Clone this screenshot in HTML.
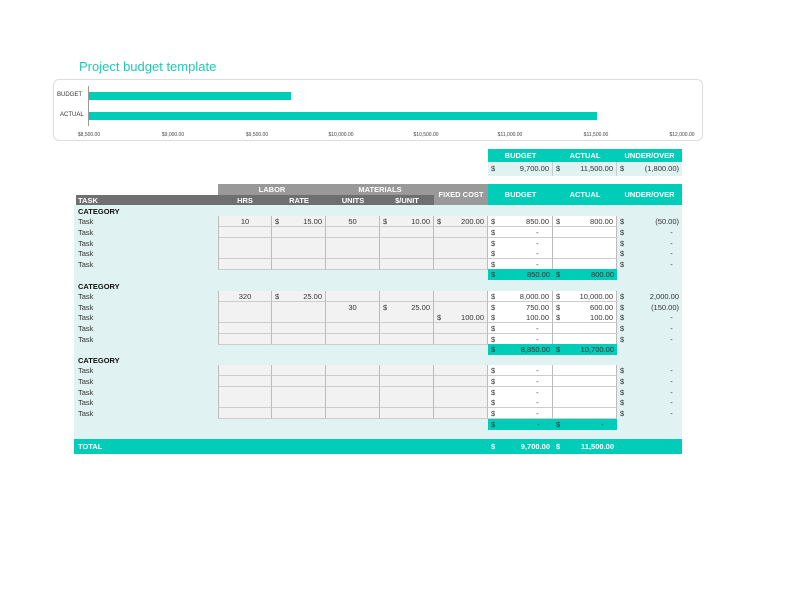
<!DOCTYPE html>
<html><head><style>
*{margin:0;padding:0;box-sizing:border-box}
body{width:790px;height:610px;background:#fff;font-family:"Liberation Sans",sans-serif;position:relative;overflow:hidden;color:#333}
.a{position:absolute}
.title{left:79px;top:59px;font-size:13px;color:#1ccbb5}
.chart{left:53px;top:79px;width:650px;height:62px;border:1px solid #ddd;border-radius:6px}
.lbl{font-size:6px;color:#333}
.bar{background:#00cdb8;height:8px}
.ax{font-size:5px;color:#444;transform:translateX(-50%)}
.row{position:absolute;left:76px;width:606px;height:11px;display:flex;font-size:7.5px;line-height:11px}
.row>div{height:11px}
.t{width:142px;padding-left:2px}
.g{width:54px;background:#f2f2f2;border-right:1px solid #bbb;border-bottom:1px solid #ccc;display:flex;justify-content:space-between;padding:0 3px}
.g.c{justify-content:center}
.g.f{border-left:1px solid #bbb}
.w{background:#fff;border-bottom:1px solid #ccc;border-right:1px solid #bbb;display:flex;justify-content:space-between;padding:0 3px}
.b{width:65px}.ac{width:64px}.u{width:65px;display:flex;justify-content:space-between;padding:0 3px}
.cat{position:absolute;left:78px;font-size:7.5px;font-weight:bold;color:#111}
.sub{position:absolute;left:488px;width:129px;height:11px;background:#00cdb8;display:flex;font-size:7.5px;line-height:11px;color:#333}
.sub div{display:flex;justify-content:space-between;padding:0 3px}
.hd{color:#fff;font-size:7.5px;font-weight:bold;display:flex;align-items:center;justify-content:center}
</style></head><body>
<div class="a title">Project budget template</div>
<div class="a chart"></div>
<div class="a lbl" style="left:57px;top:92px">BUDGET</div>
<div class="a lbl" style="left:60px;top:112px">ACTUAL</div>
<div class="a" style="left:88px;top:86px;width:1px;height:40px;background:#999"></div>
<div class="a bar" style="left:89px;top:92px;width:202px"></div>
<div class="a bar" style="left:89px;top:112px;width:508px"></div>
<div class="a ax" style="left:89px;top:132px">$8,500.00</div>
<div class="a ax" style="left:173px;top:132px">$9,000.00</div>
<div class="a ax" style="left:257px;top:132px">$9,500.00</div>
<div class="a ax" style="left:341px;top:132px">$10,000.00</div>
<div class="a ax" style="left:426px;top:132px">$10,500.00</div>
<div class="a ax" style="left:510px;top:132px">$11,000.00</div>
<div class="a ax" style="left:596px;top:132px">$11,500.00</div>
<div class="a ax" style="left:682px;top:132px">$12,000.00</div>

<div class="a" style="left:488px;top:149px;width:194px;height:13px;background:#00cdb8;display:flex">
<div class="hd" style="width:65px">BUDGET</div><div class="hd" style="width:64px">ACTUAL</div><div class="hd" style="width:65px">UNDER/OVER</div></div>
<div class="a" style="left:488px;top:162px;width:194px;height:14px;background:#e0f2f1;display:flex;font-size:7.5px;line-height:14px">
<div style="width:65px;display:flex;justify-content:space-between;padding:0 3px;border-right:1px solid #ccc"><span>$</span><span>9,700.00</span></div>
<div style="width:64px;display:flex;justify-content:space-between;padding:0 3px;border-right:1px solid #ccc"><span>$</span><span>11,500.00</span></div>
<div style="width:65px;display:flex;justify-content:space-between;padding:0 3px"><span>$</span><span>(1,800.00)</span></div></div>

<div class="a" style="left:74px;top:205px;width:608px;height:234px;background:#e0f2f1"></div>
<div class="a" style="left:218px;top:184px;width:216px;height:11px;background:#999;display:flex"><div class="hd" style="width:108px">LABOR</div><div class="hd" style="width:108px">MATERIALS</div></div>
<div class="a" style="left:76px;top:195px;width:358px;height:10px;background:#6f6f6f;display:flex">
<div class="hd" style="width:142px;justify-content:flex-start;padding-left:2px">TASK</div><div class="hd" style="width:54px">HRS</div><div class="hd" style="width:54px">RATE</div><div class="hd" style="width:54px">UNITS</div><div class="hd" style="width:54px">$/UNIT</div></div>
<div class="a hd" style="left:434px;top:184px;width:54px;height:21px;background:#999">FIXED COST</div>
<div class="a" style="left:488px;top:184px;width:194px;height:21px;background:#00cdb8;display:flex"><div class="hd" style="width:65px">BUDGET</div><div class="hd" style="width:64px">ACTUAL</div><div class="hd" style="width:65px">UNDER/OVER</div></div>

<div class="cat" style="top:207px">CATEGORY</div>
<div class="row" style="top:216px"><div class="t">Task</div><div class="g c f">10</div><div class="g"><span>$</span><span>15.00</span></div><div class="g c">50</div><div class="g"><span>$</span><span>10.00</span></div><div class="g"><span>$</span><span>200.00</span></div><div class="w b"><span>$</span><span>850.00</span></div><div class="w ac"><span>$</span><span>800.00</span></div><div class="u"><span>$</span><span>(50.00)</span></div></div>
<div class="row" style="top:227px"><div class="t">Task</div><div class="g f"></div><div class="g"></div><div class="g"></div><div class="g"></div><div class="g"></div><div class="w b"><span>$</span><span>-&nbsp;&nbsp;&nbsp;&nbsp;&nbsp;</span></div><div class="w ac"></div><div class="u"><span>$</span><span>-&nbsp;&nbsp;&nbsp;</span></div></div>
<div class="row" style="top:238px"><div class="t">Task</div><div class="g f"></div><div class="g"></div><div class="g"></div><div class="g"></div><div class="g"></div><div class="w b"><span>$</span><span>-&nbsp;&nbsp;&nbsp;&nbsp;&nbsp;</span></div><div class="w ac"></div><div class="u"><span>$</span><span>-&nbsp;&nbsp;&nbsp;</span></div></div>
<div class="row" style="top:248px"><div class="t">Task</div><div class="g f"></div><div class="g"></div><div class="g"></div><div class="g"></div><div class="g"></div><div class="w b"><span>$</span><span>-&nbsp;&nbsp;&nbsp;&nbsp;&nbsp;</span></div><div class="w ac"></div><div class="u"><span>$</span><span>-&nbsp;&nbsp;&nbsp;</span></div></div>
<div class="row" style="top:259px"><div class="t">Task</div><div class="g f"></div><div class="g"></div><div class="g"></div><div class="g"></div><div class="g"></div><div class="w b"><span>$</span><span>-&nbsp;&nbsp;&nbsp;&nbsp;&nbsp;</span></div><div class="w ac"></div><div class="u"><span>$</span><span>-&nbsp;&nbsp;&nbsp;</span></div></div>
<div class="sub" style="top:269px"><div style="width:65px"><span>$</span><span>850.00</span></div><div style="width:64px"><span>$</span><span>800.00</span></div></div>

<div class="cat" style="top:282px">CATEGORY</div>
<div class="row" style="top:291px"><div class="t">Task</div><div class="g c f">320</div><div class="g"><span>$</span><span>25.00</span></div><div class="g"></div><div class="g"></div><div class="g"></div><div class="w b"><span>$</span><span>8,000.00</span></div><div class="w ac"><span>$</span><span>10,000.00</span></div><div class="u"><span>$</span><span>2,000.00</span></div></div>
<div class="row" style="top:302px"><div class="t">Task</div><div class="g f"></div><div class="g"></div><div class="g c">30</div><div class="g"><span>$</span><span>25.00</span></div><div class="g"></div><div class="w b"><span>$</span><span>750.00</span></div><div class="w ac"><span>$</span><span>600.00</span></div><div class="u"><span>$</span><span>(150.00)</span></div></div>
<div class="row" style="top:312px"><div class="t">Task</div><div class="g f"></div><div class="g"></div><div class="g"></div><div class="g"></div><div class="g"><span>$</span><span>100.00</span></div><div class="w b"><span>$</span><span>100.00</span></div><div class="w ac"><span>$</span><span>100.00</span></div><div class="u"><span>$</span><span>-&nbsp;&nbsp;&nbsp;</span></div></div>
<div class="row" style="top:323px"><div class="t">Task</div><div class="g f"></div><div class="g"></div><div class="g"></div><div class="g"></div><div class="g"></div><div class="w b"><span>$</span><span>-&nbsp;&nbsp;&nbsp;&nbsp;&nbsp;</span></div><div class="w ac"></div><div class="u"><span>$</span><span>-&nbsp;&nbsp;&nbsp;</span></div></div>
<div class="row" style="top:334px"><div class="t">Task</div><div class="g f"></div><div class="g"></div><div class="g"></div><div class="g"></div><div class="g"></div><div class="w b"><span>$</span><span>-&nbsp;&nbsp;&nbsp;&nbsp;&nbsp;</span></div><div class="w ac"></div><div class="u"><span>$</span><span>-&nbsp;&nbsp;&nbsp;</span></div></div>
<div class="sub" style="top:344px"><div style="width:65px"><span>$</span><span>8,850.00</span></div><div style="width:64px"><span>$</span><span>10,700.00</span></div></div>

<div class="cat" style="top:356px">CATEGORY</div>
<div class="row" style="top:365px"><div class="t">Task</div><div class="g f"></div><div class="g"></div><div class="g"></div><div class="g"></div><div class="g"></div><div class="w b"><span>$</span><span>-&nbsp;&nbsp;&nbsp;&nbsp;&nbsp;</span></div><div class="w ac"></div><div class="u"><span>$</span><span>-&nbsp;&nbsp;&nbsp;</span></div></div>
<div class="row" style="top:376px"><div class="t">Task</div><div class="g f"></div><div class="g"></div><div class="g"></div><div class="g"></div><div class="g"></div><div class="w b"><span>$</span><span>-&nbsp;&nbsp;&nbsp;&nbsp;&nbsp;</span></div><div class="w ac"></div><div class="u"><span>$</span><span>-&nbsp;&nbsp;&nbsp;</span></div></div>
<div class="row" style="top:387px"><div class="t">Task</div><div class="g f"></div><div class="g"></div><div class="g"></div><div class="g"></div><div class="g"></div><div class="w b"><span>$</span><span>-&nbsp;&nbsp;&nbsp;&nbsp;&nbsp;</span></div><div class="w ac"></div><div class="u"><span>$</span><span>-&nbsp;&nbsp;&nbsp;</span></div></div>
<div class="row" style="top:397px"><div class="t">Task</div><div class="g f"></div><div class="g"></div><div class="g"></div><div class="g"></div><div class="g"></div><div class="w b"><span>$</span><span>-&nbsp;&nbsp;&nbsp;&nbsp;&nbsp;</span></div><div class="w ac"></div><div class="u"><span>$</span><span>-&nbsp;&nbsp;&nbsp;</span></div></div>
<div class="row" style="top:408px"><div class="t">Task</div><div class="g f"></div><div class="g"></div><div class="g"></div><div class="g"></div><div class="g"></div><div class="w b"><span>$</span><span>-&nbsp;&nbsp;&nbsp;&nbsp;&nbsp;</span></div><div class="w ac"></div><div class="u"><span>$</span><span>-&nbsp;&nbsp;&nbsp;</span></div></div>
<div class="sub" style="top:419px"><div style="width:65px"><span>$</span><span>-&nbsp;&nbsp;&nbsp;&nbsp;&nbsp;</span></div><div style="width:64px"><span>$</span><span>-&nbsp;&nbsp;&nbsp;&nbsp;&nbsp;</span></div></div>

<div class="a" style="left:74px;top:439px;width:608px;height:15px;background:#00cdb8;font-size:7.5px;line-height:15px;color:#fff;font-weight:bold">
<span class="a" style="left:4px">TOTAL</span>
<div class="a" style="left:414px;width:65px;display:flex;justify-content:space-between;padding:0 3px"><span>$</span><span>9,700.00</span></div>
<div class="a" style="left:479px;width:64px;display:flex;justify-content:space-between;padding:0 3px"><span>$</span><span>11,500.00</span></div>
</div>
</body></html>
